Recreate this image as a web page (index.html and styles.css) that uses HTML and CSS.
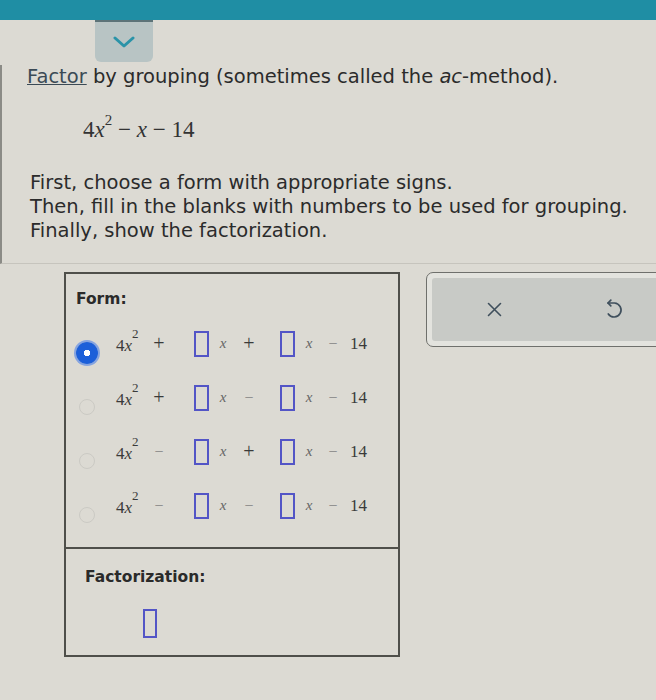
FILE: index.html
```html
<!DOCTYPE html>
<html lang="en">
<head>
  <meta charset="UTF-8">
  <title>Factor by grouping</title>
  <link rel="stylesheet" href="styles.css">
</head>
<body>
  <div class="topbar"></div>
  <div class="tab">
    <svg width="22" height="12" viewBox="0 0 22 12">
      <polyline points="2,2 11,10 20,2" fill="none" stroke="#2a93a8" stroke-width="3" stroke-linecap="round" stroke-linejoin="round"/>
    </svg>
  </div>

  <div class="question">
    <p class="intro"><span class="link">Factor</span> by grouping (sometimes called the <i>ac</i>-method).</p>
    <div class="equation">4<i>x</i><sup>2</sup> &minus; <i>x</i> &minus; 14</div>
    <p class="steps">
      First, choose a form with appropriate signs.<br>
      Then, fill in the blanks with numbers to be used for grouping.<br>
      Finally, show the factorization.
    </p>
  </div>

  <div class="work">
    <div class="answer">
      <div class="form-part">
        <div class="label">Form:</div>

        <div class="row">
          <span class="radio checked"></span>
          <span class="term">4<i>x</i><sup>2</sup></span>
          <span class="op">+</span>
          <span class="blank"></span>
          <span class="var">x</span>
          <span class="op op2">+</span>
          <span class="blank b2"></span>
          <span class="var">x</span>
          <span class="op op3">&minus;</span>
          <span class="const">14</span>
        </div>

        <div class="row">
          <span class="radio"></span>
          <span class="term">4<i>x</i><sup>2</sup></span>
          <span class="op">+</span>
          <span class="blank"></span>
          <span class="var">x</span>
          <span class="op op2 light">&minus;</span>
          <span class="blank b2"></span>
          <span class="var">x</span>
          <span class="op op3">&minus;</span>
          <span class="const">14</span>
        </div>

        <div class="row">
          <span class="radio"></span>
          <span class="term">4<i>x</i><sup>2</sup></span>
          <span class="op light">&minus;</span>
          <span class="blank"></span>
          <span class="var">x</span>
          <span class="op op2">+</span>
          <span class="blank b2"></span>
          <span class="var">x</span>
          <span class="op op3">&minus;</span>
          <span class="const">14</span>
        </div>

        <div class="row">
          <span class="radio"></span>
          <span class="term">4<i>x</i><sup>2</sup></span>
          <span class="op light">&minus;</span>
          <span class="blank"></span>
          <span class="var">x</span>
          <span class="op op2 light">&minus;</span>
          <span class="blank b2"></span>
          <span class="var">x</span>
          <span class="op op3">&minus;</span>
          <span class="const">14</span>
        </div>
      </div>

      <div class="fact-part">
        <div class="label">Factorization:</div>
        <span class="blank fact-blank"></span>
      </div>
    </div>

    <div class="tools">
      <div class="tools-inner">
        <svg class="icon" width="15" height="15" viewBox="0 0 15 15">
          <path d="M1.5 1.5 L13.5 13.5 M13.5 1.5 L1.5 13.5" stroke="#3f4f5c" stroke-width="1.6" fill="none" stroke-linecap="round"/>
        </svg>
        <svg class="icon" width="17" height="21" viewBox="0 0 17 21">
          <path d="M2 4 H8.5 A7 7 0 1 1 2.3 15" stroke="#3f4f5c" stroke-width="1.7" fill="none" stroke-linecap="round"/>
          <polyline points="4.8,1.2 2,4 4.8,6.8" stroke="#3f4f5c" stroke-width="1.7" fill="none" stroke-linecap="round" stroke-linejoin="round"/>
        </svg>
      </div>
    </div>
  </div>
</body>
</html>
```

FILE: styles.css
```css
* {
  box-sizing: border-box;
  margin: 0;
  padding: 0;
}

body {
  background: #dcdad3;
  font-family: "DejaVu Sans", Verdana, sans-serif;
  color: #2b2b2b;
  overflow: hidden;
  height: 700px;
}

.topbar {
  height: 20px;
  background: #1f8ea4;
}

.tab {
  width: 58px;
  height: 42px;
  margin-left: 95px;
  background: #b8c4c4;
  border-radius: 0 0 6px 6px;
  border-top: 2px solid #5d7378;
  display: flex;
  justify-content: center;
  align-items: center;
}

.question {
  border-left: 2px solid #8b8b86;
  border-bottom: 1px solid #c6c4bd;
  padding-bottom: 20px;
}

.intro {
  font-size: 19.5px;
  line-height: 24px;
  margin-top: 3px;
  padding-left: 25px;
}

.link {
  color: #3b4a55;
  text-decoration: underline;
}

.equation {
  font-family: "Liberation Serif", "Times New Roman", serif;
  font-size: 23px;
  line-height: 30px;
  margin-top: 19px;
  padding-left: 81px;
  color: #333;
}

.equation sup {
  font-size: 15px;
  position: relative;
  top: -3px;
}

.steps {
  font-size: 19.5px;
  line-height: 24px;
  margin-top: 26px;
  padding-left: 28px;
}

.work {
  display: flex;
  align-items: flex-start;
  margin-top: 8px;
  padding-left: 64px;
}

.answer {
  width: 336px;
  border: 2px solid #4f4f4a;
  flex: none;
}

.label {
  font-size: 15.5px;
  font-weight: bold;
  line-height: 22px;
  color: #2a2a2a;
}

.form-part {
  padding: 14px 0 14px 10px;
  border-bottom: 2px solid #4f4f4a;
}

.form-part .label {
  margin-bottom: 7px;
}

.row {
  display: flex;
  align-items: center;
  height: 54px;
  font-family: "Liberation Serif", "Times New Roman", serif;
  font-size: 17px;
  color: #3a3a3a;
}

.radio {
  width: 16px;
  height: 16px;
  margin: 18px 3px 0 3px;
  border-radius: 50%;
  border: 1.5px solid #cbcac4;
  flex: none;
}

.radio.checked {
  width: 22px;
  height: 22px;
  margin: 18px 0 0 0;
  border: none;
  background: radial-gradient(circle, #fff 0 3px, #1c5fd9 3.5px);
  box-shadow: 0 0 0 2px #86a4e0;
}

.term {
  margin-left: 18px;
  width: 28px;
  flex: none;
}

.term sup {
  font-size: 13px;
  position: relative;
  top: -6px;
}

.op {
  width: 30px;
  text-align: center;
  font-size: 20px;
  flex: none;
}

.op2 {
  width: 24px;
}

.op3 {
  width: 20px;
  font-size: 16px;
  color: #888;
}

.light {
  color: #888;
  font-size: 16px;
}

.blank {
  display: inline-block;
  width: 15px;
  height: 26px;
  border: 2px solid #5355c6;
  margin-left: 20px;
  flex: none;
}

.b2 {
  margin-left: 19px;
}

.var {
  width: 28px;
  text-align: center;
  font-style: italic;
  font-size: 15px;
  color: #666;
  flex: none;
}

.const {
  margin-left: 7px;
}

.fact-part {
  padding: 17px 0 17px 19px;
}

.fact-blank {
  display: block;
  width: 14px;
  height: 29px;
  margin: 21px 0 0 58px;
}

.tools {
  margin-left: 26px;
  width: 260px;
  flex: none;
  padding: 5px;
  border: 1px solid #6f706c;
  border-radius: 7px;
  background: #e3e3de;
}

.tools-inner {
  height: 63px;
  background: #c8cac6;
  border-radius: 3px;
  display: flex;
  align-items: center;
  padding-left: 55px;
  gap: 104px;
}
```
